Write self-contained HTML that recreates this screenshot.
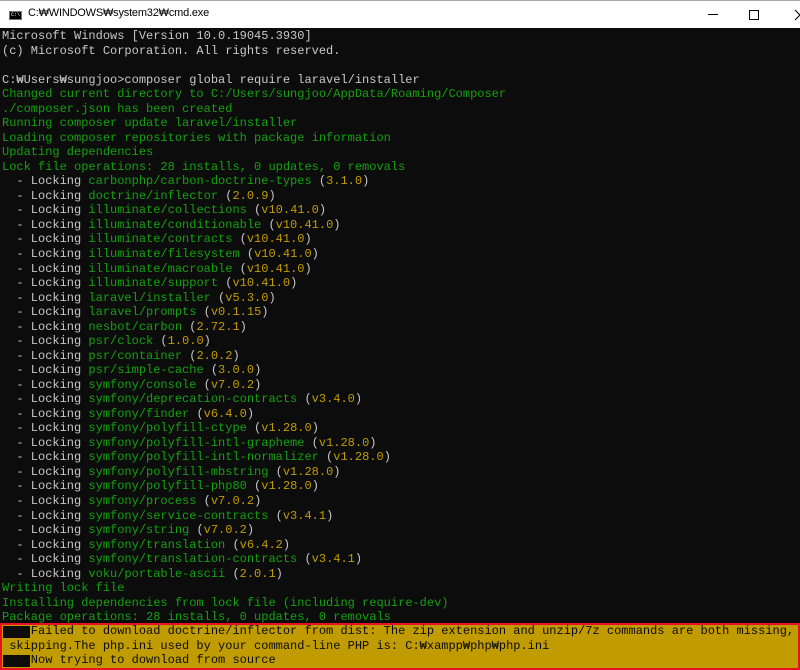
<!DOCTYPE html>
<html><head><meta charset="utf-8"><style>
html,body{margin:0;padding:0;width:800px;height:670px;overflow:hidden;background:#0c0c0c}
.title{position:absolute;left:0;top:0;width:800px;height:28px;background:#fff;border-top:1px solid #aaa;box-sizing:border-box}
.title .t{position:absolute;left:28px;top:6px;font:11px "Liberation Sans","Noto Sans CJK KR",sans-serif;letter-spacing:-0.2px;color:#000}
.icon{position:absolute;left:9px;top:10px;width:13px;height:9px;background:#000;border:1px solid #777;box-sizing:border-box}
.icon span{position:absolute;left:1px;top:1px;font:5px "Liberation Mono",monospace;color:#fff;line-height:5px}
.ctl{position:absolute;top:0}
.con{position:absolute;left:2px;top:29px;font:12px "Liberation Mono","NanumGothic",monospace;line-height:14.53px;color:#c8c8c8;white-space:pre}
.g{color:#13a10e}.y{color:#c19c00}
.warn{position:absolute;left:0;top:623px;width:800px;height:47px;background:#c19c00;border:2px solid #e81123;box-sizing:border-box}
.wt{position:absolute;left:2px;top:624px;font:12px "Liberation Mono",monospace;line-height:14.53px;color:#0c0c0c;white-space:pre}
.blk{position:absolute;left:3px;width:27px;height:12px;background:#0c0c0c}
</style></head><body>
<div class="title"><div class="icon"><span>C:\</span></div><div class="t">C:₩WINDOWS₩system32₩cmd.exe</div>
<svg class="ctl" width="800" height="28" style="left:0"><line x1="708" y1="13.5" x2="718" y2="13.5" stroke="#000" stroke-width="1"/><rect x="749.5" y="9.5" width="9" height="9" fill="none" stroke="#000"/><line x1="795" y1="9" x2="805" y2="19" stroke="#000"/><line x1="805" y1="9" x2="795" y2="19" stroke="#000"/></svg></div>
<div class="con">Microsoft Windows [Version 10.0.19045.3930]
(c) Microsoft Corporation. All rights reserved.

C:₩Users₩sungjoo&gt;composer global require laravel/installer
<span class="g">Changed current directory to C:/Users/sungjoo/AppData/Roaming/Composer
./composer.json has been created
Running composer update laravel/installer
Loading composer repositories with package information
Updating dependencies
Lock file operations: 28 installs, 0 updates, 0 removals</span>
  - Locking <span class="g">carbonphp/carbon-doctrine-types</span> (<span class="y">3.1.0</span>)
  - Locking <span class="g">doctrine/inflector</span> (<span class="y">2.0.9</span>)
  - Locking <span class="g">illuminate/collections</span> (<span class="y">v10.41.0</span>)
  - Locking <span class="g">illuminate/conditionable</span> (<span class="y">v10.41.0</span>)
  - Locking <span class="g">illuminate/contracts</span> (<span class="y">v10.41.0</span>)
  - Locking <span class="g">illuminate/filesystem</span> (<span class="y">v10.41.0</span>)
  - Locking <span class="g">illuminate/macroable</span> (<span class="y">v10.41.0</span>)
  - Locking <span class="g">illuminate/support</span> (<span class="y">v10.41.0</span>)
  - Locking <span class="g">laravel/installer</span> (<span class="y">v5.3.0</span>)
  - Locking <span class="g">laravel/prompts</span> (<span class="y">v0.1.15</span>)
  - Locking <span class="g">nesbot/carbon</span> (<span class="y">2.72.1</span>)
  - Locking <span class="g">psr/clock</span> (<span class="y">1.0.0</span>)
  - Locking <span class="g">psr/container</span> (<span class="y">2.0.2</span>)
  - Locking <span class="g">psr/simple-cache</span> (<span class="y">3.0.0</span>)
  - Locking <span class="g">symfony/console</span> (<span class="y">v7.0.2</span>)
  - Locking <span class="g">symfony/deprecation-contracts</span> (<span class="y">v3.4.0</span>)
  - Locking <span class="g">symfony/finder</span> (<span class="y">v6.4.0</span>)
  - Locking <span class="g">symfony/polyfill-ctype</span> (<span class="y">v1.28.0</span>)
  - Locking <span class="g">symfony/polyfill-intl-grapheme</span> (<span class="y">v1.28.0</span>)
  - Locking <span class="g">symfony/polyfill-intl-normalizer</span> (<span class="y">v1.28.0</span>)
  - Locking <span class="g">symfony/polyfill-mbstring</span> (<span class="y">v1.28.0</span>)
  - Locking <span class="g">symfony/polyfill-php80</span> (<span class="y">v1.28.0</span>)
  - Locking <span class="g">symfony/process</span> (<span class="y">v7.0.2</span>)
  - Locking <span class="g">symfony/service-contracts</span> (<span class="y">v3.4.1</span>)
  - Locking <span class="g">symfony/string</span> (<span class="y">v7.0.2</span>)
  - Locking <span class="g">symfony/translation</span> (<span class="y">v6.4.2</span>)
  - Locking <span class="g">symfony/translation-contracts</span> (<span class="y">v3.4.1</span>)
  - Locking <span class="g">voku/portable-ascii</span> (<span class="y">2.0.1</span>)
<span class="g">Writing lock file
Installing dependencies from lock file (including require-dev)
Package operations: 28 installs, 0 updates, 0 removals</span></div>
<div class="warn"></div>
<div class="blk" style="top:626px"></div>
<div class="blk" style="top:655px"></div>
<div class="wt">    Failed to download doctrine/inflector from dist: The zip extension and unzip/7z commands are both missing,
 skipping.The php.ini used by your command-line PHP is: C:₩xampp₩php₩php.ini
    Now trying to download from source</div>
</body></html>
